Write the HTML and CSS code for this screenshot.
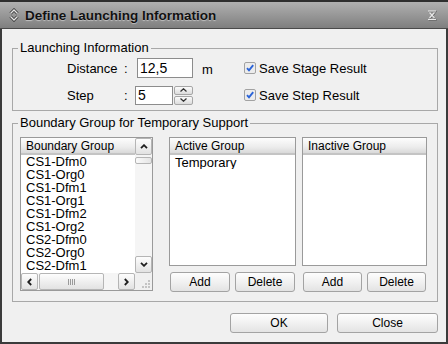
FILE: index.html
```html
<!DOCTYPE html>
<html lang="en">
<head>
    <meta charset="UTF-8">
    <title>Define Launching Information</title>
    <link rel="stylesheet" href="styles.css">
</head>
<body>
    <div class="window">
        <div class="titlebar">
            <svg class="title-icon" width="10" height="14" viewBox="0 0 10 14">
                <polyline points="1.5,5.5 5,2 8.5,5.5" fill="none" stroke="#3a3a3a" stroke-width="3"/>
                <polyline points="1.5,5.5 5,2 8.5,5.5" fill="none" stroke="#e6e6e6" stroke-width="1.3"/>
                <polyline points="1.5,8.5 5,12 8.5,8.5" fill="none" stroke="#3a3a3a" stroke-width="3"/>
                <polyline points="1.5,8.5 5,12 8.5,8.5" fill="none" stroke="#e6e6e6" stroke-width="1.3"/>
            </svg>
            <span class="title">Define Launching Information</span>
            <svg class="close-icon" width="11" height="11" viewBox="0 0 11 11">
                <g stroke="#5a5a5a" stroke-width="1.4" fill="none" transform="translate(0.6,0.6)">
                    <line x1="1" y1="1" x2="9" y2="1"/>
                    <line x1="1" y1="9.5" x2="9" y2="9.5"/>
                    <line x1="2.5" y1="2.5" x2="7.5" y2="8"/>
                    <line x1="7.5" y1="2.5" x2="2.5" y2="8"/>
                </g>
                <g stroke="#e8e8e8" stroke-width="1.2" fill="none">
                    <line x1="1" y1="1" x2="9" y2="1"/>
                    <line x1="1" y1="9.5" x2="9" y2="9.5"/>
                    <line x1="2.5" y1="2.5" x2="7.5" y2="8"/>
                    <line x1="7.5" y1="2.5" x2="2.5" y2="8"/>
                </g>
            </svg>
        </div>

        <div class="content">
            <fieldset class="group launch">
                <legend>Launching Information</legend>
                <div class="launch-grid">
                    <span class="label">Distance</span>
                    <span class="colon">:</span>
                    <div class="field">12,5</div>
                    <span class="unit">m</span>
                    <label class="check">
                        <svg width="12" height="12" viewBox="0 0 12 12">
                            <rect x="0.5" y="0.5" width="11" height="11" rx="1.5" fill="#ececec" stroke="#a2a2a2"/>
                            <polyline points="3,6.2 5,8.4 9.2,3.2" fill="none" stroke="#2a63d8" stroke-width="1.9"/>
                        </svg>
                        Save Stage Result
                    </label>

                    <span class="label">Step</span>
                    <span class="colon">:</span>
                    <div class="stepper">
                        <div class="field small">5</div>
                        <div class="spin">
                            <div class="spin-btn">
                                <svg width="7" height="4" viewBox="0 0 7 4"><polyline points="0.5,3.5 3.5,0.8 6.5,3.5" fill="none" stroke="#333" stroke-width="1.3"/></svg>
                            </div>
                            <div class="spin-btn">
                                <svg width="7" height="4" viewBox="0 0 7 4"><polyline points="0.5,0.5 3.5,3.2 6.5,0.5" fill="none" stroke="#333" stroke-width="1.3"/></svg>
                            </div>
                        </div>
                    </div>
                    <span></span>
                    <label class="check">
                        <svg width="12" height="12" viewBox="0 0 12 12">
                            <rect x="0.5" y="0.5" width="11" height="11" rx="1.5" fill="#ececec" stroke="#a2a2a2"/>
                            <polyline points="3,6.2 5,8.4 9.2,3.2" fill="none" stroke="#2a63d8" stroke-width="1.9"/>
                        </svg>
                        Save Step Result
                    </label>
                </div>
            </fieldset>

            <fieldset class="group boundary">
                <legend>Boundary Group for Temporary Support</legend>
                <div class="lists">
                    <div class="list scroll-list">
                        <div class="list-header">Boundary Group</div>
                        <div class="items">
                            <div>CS1-Dfm0</div>
                            <div>CS1-Org0</div>
                            <div>CS1-Dfm1</div>
                            <div>CS1-Org1</div>
                            <div>CS1-Dfm2</div>
                            <div>CS1-Org2</div>
                            <div>CS2-Dfm0</div>
                            <div>CS2-Org0</div>
                            <div>CS2-Dfm1</div>
                        </div>
                        <div class="vscroll">
                            <div class="sb-btn">
                                <svg width="8" height="5" viewBox="0 0 8 5"><polyline points="1,4.2 4,1.2 7,4.2" fill="none" stroke="#1e1e1e" stroke-width="1.8"/></svg>
                            </div>
                            <div class="sb-track">
                                <div class="sb-thumb-v"></div>
                            </div>
                            <div class="sb-btn">
                                <svg width="8" height="5" viewBox="0 0 8 5"><polyline points="1,0.8 4,3.8 7,0.8" fill="none" stroke="#1e1e1e" stroke-width="1.8"/></svg>
                            </div>
                        </div>
                        <div class="hscroll">
                            <div class="sb-btn">
                                <svg width="5" height="8" viewBox="0 0 5 8"><polyline points="4.2,1 1.2,4 4.2,7" fill="none" stroke="#1e1e1e" stroke-width="1.8"/></svg>
                            </div>
                            <div class="sb-track h">
                                <div class="sb-thumb-h">
                                    <svg width="7" height="6" viewBox="0 0 7 6"><g stroke="#9a9a9a" stroke-width="1"><line x1="0.5" y1="0" x2="0.5" y2="6"/><line x1="2.5" y1="0" x2="2.5" y2="6"/><line x1="4.5" y1="0" x2="4.5" y2="6"/><line x1="6.5" y1="0" x2="6.5" y2="6"/></g></svg>
                                </div>
                            </div>
                            <div class="sb-btn">
                                <svg width="5" height="8" viewBox="0 0 5 8"><polyline points="0.8,1 3.8,4 0.8,7" fill="none" stroke="#1e1e1e" stroke-width="1.8"/></svg>
                            </div>
                        </div>
                        <div class="grip">
                            <svg width="10" height="10" viewBox="0 0 10 10"><g fill="#c4c4c4"><rect x="8" y="2" width="2" height="2"/><rect x="5" y="5" width="2" height="2"/><rect x="8" y="5" width="2" height="2"/><rect x="2" y="8" width="2" height="2"/><rect x="5" y="8" width="2" height="2"/><rect x="8" y="8" width="2" height="2"/></g></svg>
                        </div>
                    </div>

                    <div class="group-col active-col">
                        <div class="list">
                            <div class="list-header">Active Group</div>
                            <div class="items">
                                <div>Temporary</div>
                            </div>
                        </div>
                        <div class="btn-row">
                            <button class="btn">Add</button>
                            <button class="btn">Delete</button>
                        </div>
                    </div>

                    <div class="group-col inactive-col">
                        <div class="list">
                            <div class="list-header">Inactive Group</div>
                            <div class="items"></div>
                        </div>
                        <div class="btn-row">
                            <button class="btn">Add</button>
                            <button class="btn">Delete</button>
                        </div>
                    </div>
                </div>
            </fieldset>

            <div class="dialog-buttons">
                <button class="btn ok">OK</button>
                <button class="btn close">Close</button>
            </div>
        </div>
    </div>
</body>
</html>
```

FILE: styles.css
```css
* {
    box-sizing: border-box;
}

body {
    margin: 0;
    font-family: "Liberation Sans", Arial, sans-serif;
    font-size: 13px;
    color: #000;
    background-color: #f0f0f0;
}

.window {
    width: 448px;
    height: 344px;
    border: 2px solid #3b3b3b;
    border-top: none;
    background-color: #f0f0f0;
    display: flex;
    flex-direction: column;
}

.titlebar {
    height: 29px;
    border-top: 2px solid #2e2e2e;
    border-bottom: 1px solid #4a4a4a;
    background: linear-gradient(#b0b0b0, #9a9a9a 45%, #7f7f7f);
    display: flex;
    align-items: center;
    padding: 0 8px 0 9px;
    margin: 0 -2px;
}

.title-icon {
    margin-right: 6px;
}

.title {
    flex: 1;
    font-weight: bold;
    font-size: 13.5px;
    color: #111;
    text-shadow: 0 1px 1px rgba(230, 230, 230, 0.6);
}

.close-icon {
    margin-right: 2px;
}

.content {
    flex: 1;
    padding: 12px 8px 0 10px;
}

.group {
    margin: 0;
    border: 1px solid #a8a8a8;
    min-width: 0;
}

.group legend {
    padding: 0 2px;
    margin-left: 5px;
    line-height: 14px;
}

.launch {
    padding: 3px 0 5px 0;
}

.launch-grid {
    display: grid;
    grid-template-columns: 57px 13px 56px 51px auto;
    grid-auto-rows: 20px;
    row-gap: 7px;
    align-items: center;
    margin-left: 54px;
}

.field {
    height: 20px;
    border: 1px solid #8c8c8c;
    background-color: #fff;
    padding: 2px 0 0 2px;
    line-height: 15px;
    font-size: 14px;
}

.stepper {
    display: flex;
    height: 19px;
    margin-left: -2px;
}

.field.small {
    width: 39px;
    height: 19px;
    padding-top: 1px;
}

.spin {
    width: 19px;
    margin-left: 1px;
    display: flex;
    flex-direction: column;
    gap: 1px;
}

.spin-btn {
    flex: 1;
    border: 1px solid #a6a6a6;
    border-radius: 2px;
    background: linear-gradient(#fbfbfb, #dcdcdc);
    display: flex;
    align-items: center;
    justify-content: center;
}

.unit {
    padding-left: 9px;
    padding-top: 3px;
}

.check {
    display: flex;
    align-items: center;
    gap: 3px;
}

.boundary {
    margin-top: 5px;
    padding: 7px 0 9px 0;
}

.lists {
    display: flex;
    gap: 6px;
    margin-left: 7px;
}

.list {
    border: 1px solid #9a9a9a;
    background-color: #fff;
}

.list-header {
    height: 17px;
    padding: 1px 0 0 5px;
    font-size: 12px;
    line-height: 14px;
    background: linear-gradient(#fdfdfd, #ececec 60%, #d9d9d9);
    border-bottom: 2px solid #c4c4c4;
}

.items {
    padding-left: 5px;
    font-size: 13px;
    line-height: 13px;
    overflow: hidden;
    white-space: nowrap;
}

.items div {
    height: 13px;
}

.scroll-list {
    width: 133px;
    height: 154px;
    margin-right: 10px;
    display: grid;
    grid-template-columns: 1fr 17px;
    grid-template-rows: 17px 1fr 17px;
}

.scroll-list .list-header {
    grid-column: 1;
    grid-row: 1;
}

.scroll-list .items {
    grid-column: 1;
    grid-row: 2;
}

.group-col .items {
    padding-top: 1px;
}

.vscroll {
    grid-column: 2;
    grid-row: 1 / 3;
    display: flex;
    flex-direction: column;
    background-color: #f5f5f5;
}

.hscroll {
    grid-column: 1;
    grid-row: 3;
    display: flex;
    background-color: #f5f5f5;
}

.sb-btn {
    width: 17px;
    height: 17px;
    border: 1px solid #b5b5b5;
    border-radius: 2px;
    background: linear-gradient(#fdfdfd, #e2e2e2);
    display: flex;
    align-items: center;
    justify-content: center;
    flex-shrink: 0;
}

.sb-track {
    flex: 1;
    padding: 2px 0;
}

.sb-track.h {
    padding: 0 14px 0 1px;
}

.sb-thumb-v {
    height: 7px;
    border: 1px solid #b5b5b5;
    border-radius: 2px;
    background: linear-gradient(90deg, #fafafa, #e4e4e4);
}

.sb-thumb-h {
    height: 17px;
    border: 1px solid #b5b5b5;
    border-radius: 2px;
    background: linear-gradient(#fdfdfd, #e2e2e2);
    display: flex;
    align-items: center;
    justify-content: center;
}

.grip {
    grid-column: 2;
    grid-row: 3;
    background-color: #f0f0f0;
    display: flex;
    align-items: flex-end;
    justify-content: flex-end;
    padding: 0 2px 2px 0;
}

.group-col {
    display: flex;
    flex-direction: column;
    gap: 6px;
}

.group-col .list {
    height: 129px;
}

.active-col {
    width: 127px;
}

.inactive-col {
    width: 125px;
}

.btn-row {
    display: flex;
    gap: 5px;
    padding: 0 1px;
}

.btn-row .btn {
    flex: 1;
}

.btn {
    height: 20px;
    padding: 0;
    font-family: "Liberation Sans", Arial, sans-serif;
    font-size: 12px;
    color: #000;
    border: 1px solid #a3a3a3;
    border-radius: 3px;
    background: linear-gradient(#fdfdfd, #f1f1f1 50%, #e3e3e3);
}

.dialog-buttons {
    display: flex;
    justify-content: flex-end;
    gap: 9px;
    margin-top: 11px;
}

.ok {
    width: 98px;
}

.close {
    width: 101px;
}
```
